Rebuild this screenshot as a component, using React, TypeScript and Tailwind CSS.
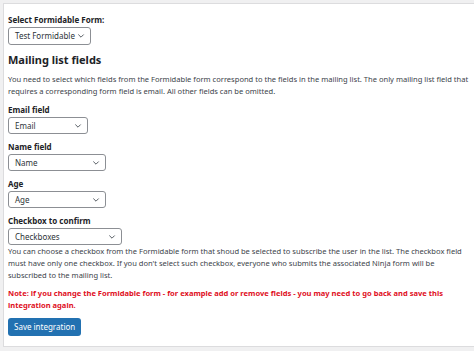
import React from 'react';

const Chevron = () => (
  <svg width="8" height="8" viewBox="0 0 10 10" fill="none" className="shrink-0">
    <path d="M2 3.5 L5 6.5 L8 3.5" stroke="#50575e" strokeWidth="1.2" strokeLinecap="round" strokeLinejoin="round" />
  </svg>
);

const Select: React.FC<{ value: string; width: string; height?: string }> = ({ value, width, height = 'h-[17px]' }) => (
  <div
    className={`${width} ${height} flex items-center justify-between pl-[6px] pr-[5px] border border-[#8c8f94] rounded-[3px] bg-white text-[8px] text-[#2c3338] whitespace-nowrap`}
  >
    <span>{value}</span>
    <Chevron />
  </div>
);

const Field: React.FC<{ label: string; value: string; width: string }> = ({ label, value, width }) => (
  <div className="flex flex-col gap-[1px]">
    <span className="text-[8px] font-bold text-[#1d2327] leading-[12px]">{label}</span>
    <Select value={value} width={width} />
  </div>
);

export default function App() {
  return (
    <div
      className="w-[474px] h-[351px] bg-[#f0f0f1] pl-[3px] pt-[3px] overflow-hidden"
      style={{ fontFamily: '"Noto Sans", "Open Sans", sans-serif' }}
    >
      <div className="h-[344px] bg-white border border-[#dcdcde] border-r-0 pl-[4px] pt-[10px]">
        {/* Form selector */}
        <div className="flex flex-col gap-[1px]">
          <span className="text-[8px] font-bold text-[#1d2327] leading-[12px]">Select Formidable Form:</span>
          <Select value="Test Formidable" width="w-[83px]" height="h-[18px]" />
        </div>

        <h2 className="mt-[7px] text-[11px] font-bold text-[#1d2327] leading-[16px]">Mailing list fields</h2>
        <p className="mt-[5px] text-[7.55px] leading-[12px] text-[#3c434a]">
          You need to select which fields from the Formidable form correspond to the fields in the mailing list. The only mailing list field that
          requires a corresponding form field is email. All other fields can be omitted.
        </p>

        <div className="mt-[7px] flex flex-col gap-[7px]">
          <Field label="Email field" value="Email" width="w-[80px]" />
          <Field label="Name field" value="Name" width="w-[98px]" />
          <Field label="Age" value="Age" width="w-[98px]" />
          <Field label="Checkbox to confirm" value="Checkboxes" width="w-[114px]" />
        </div>

        <p className="text-[7.55px] leading-[12px] text-[#3c434a]">
          You can choose a checkbox from the Formidable form that shoud be selected to subscribe the user in the list. The checkbox field must
          have only one checkbox. If you don't select such checkbox, everyone who submits the associated Ninja form will be subscribed to the
          mailing list.
        </p>

        <p className="mt-[6px] text-[7.55px] leading-[12px] font-bold text-[#e0101e]">
          Note: if you change the Formidable form - for example add or remove fields - you may need to go back and save this integration again.
        </p>

        <button className="mt-[7px] h-[18px] px-[6px] rounded-[3px] bg-[#2271b1] text-white text-[8px] leading-[18px]">
          Save integration
        </button>
      </div>
    </div>
  );
}
